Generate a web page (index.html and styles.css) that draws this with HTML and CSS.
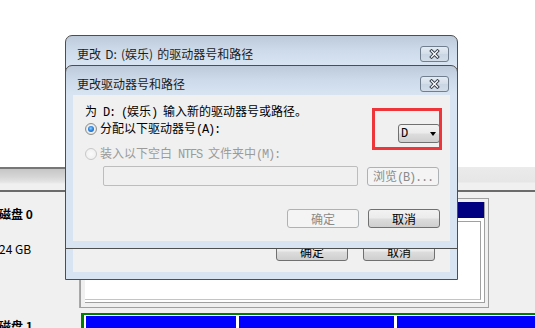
FILE: index.html
```html
<!DOCTYPE html>
<html lang="zh-CN">
<head>
<meta charset="utf-8">
<title>更改驱动器号和路径</title>
<link rel="stylesheet" href="styles.css">
</head>
<body>
<div class="page">
  <div class="listview"></div>
  <div class="hsplit"><div class="hs-left"></div><div class="hs-right"></div></div>
  <div class="splitline"></div>
  <div class="graph">
    <div class="diskrow disk0">
      <div class="disklabel">
        <div class="dname">磁盘 0</div>
        <div class="dsize">24 GB</div>
      </div>
      <div class="diskbody">
        <div class="part">
          <div class="parthead"></div>
          <div class="partbody"><div class="partinner"></div></div>
        </div>
      </div>
    </div>
    <div class="diskrow disk1">
      <div class="disklabel l1"><div class="dname">磁盘 1</div></div>
      <div class="diskbody1">
        <div class="vol v1"></div>
        <div class="vol v2"></div>
        <div class="vol v3"></div>
      </div>
    </div>
  </div>
</div>

<div class="win outer">
  <div class="titlebar">
    <span class="title">更改 D: (娱乐) 的驱动器号和路径</span>
    <span class="close"><svg width="13" height="10" viewBox="0 0 13 10"><path d="M3.5 2L9.5 8M9.5 2L3.5 8" stroke="#3a414b" stroke-width="3.2" stroke-linecap="square" fill="none"/><path d="M3.5 2L9.5 8M9.5 2L3.5 8" stroke="#ffffff" stroke-width="1.3" stroke-linecap="square" fill="none"/></svg></span>
  </div>
  <div class="frame">
    <div class="client outer-client">
      <div class="btnrow outer-btns">
        <div class="btn">确定</div>
        <div class="btn">取消</div>
      </div>
    </div>
  </div>
</div>

<div class="win inner">
  <div class="titlebar">
    <span class="title">更改驱动器号和路径</span>
    <span class="close"><svg width="13" height="10" viewBox="0 0 13 10"><path d="M3.5 2L9.5 8M9.5 2L3.5 8" stroke="#3a414b" stroke-width="3.2" stroke-linecap="square" fill="none"/><path d="M3.5 2L9.5 8M9.5 2L3.5 8" stroke="#ffffff" stroke-width="1.3" stroke-linecap="square" fill="none"/></svg></span>
  </div>
  <div class="frame">
    <div class="client inner-client">
      <div class="prompt">为<span class="en"> D: (</span>娱乐<span class="en">) </span>输入新的驱动器号或路径。</div>
      <div class="optrow">
        <div class="opt"><span class="radio on"></span><span class="optlabel">分配以下驱动器号<span class="en">(A):</span></span></div>
        <div class="combo"><span class="en">D</span><span class="arrow"></span></div>
      </div>
      <div class="opt disabled"><span class="radio off"></span><span class="optlabel">装入以下空白<span class="en"> NTFS </span>文件夹中<span class="en">(M):</span></span></div>
      <div class="pathrow">
        <div class="pathbox"></div>
        <div class="btn dis browse"><span>浏览<span class="en">(B)...</span></span></div>
      </div>
      <div class="btnrow inner-btns">
        <div class="btn dis">确定</div>
        <div class="btn">取消</div>
      </div>
      <div class="highlight"></div>
    </div>
  </div>
</div>
</body>
</html>
```

FILE: styles.css
```css
* { box-sizing: border-box; }
html, body { margin: 0; padding: 0; }
body {
  width: 535px;
  height: 328px;
  overflow: hidden;
  position: relative;
  background: #ffffff;
  font-family: "Noto Sans CJK SC", sans-serif;
  font-size: 12px;
  line-height: 16px;
  color: #000;
}

/* ---------- background: disk management ---------- */
.page { width: 535px; height: 328px; display: flex; flex-direction: column; }
.listview { height: 167px; flex: none; background: #fff; }
.hsplit { height: 23px; flex: none; display: flex; }
.hs-left {
  width: 65px;
  border-top: 2px solid #777;
  background: linear-gradient(#c6c6c6 0, #d6d6d6 8px, #e4e4e4 13px, #f0f0f0 15px, #f0f0f0 100%);
}
.hs-right {
  flex: 1;
  background: linear-gradient(#ebebeb 0, #e6e6e6 15px, #f0f0f0 16px, #f0f0f0 100%);
}
.splitline { height: 2px; flex: none; background: #6b6b6b; }
.graph { flex: 1; background: #f0f0f0; }

.diskrow { display: flex; }
.disk0 { height: 116px; }
.disklabel {
  width: 81px;
  flex: none;
  padding-top: 14px;
  margin-left: -1px;
  border-right: 1px solid #a8a8a8;
}
.dname { font-weight: bold; }
.dsize { margin-top: 19px; }

.diskbody {
  width: 409px;
  height: 110px;
  margin-top: 6px;
  border: 1px solid #a0a0a0;
  padding: 3px 3px 3px 4px;
  background: #f0f0f0;
}
.part {
  height: 101px;
  border-right: 1px solid #a0a0a0;
  border-bottom: 1px solid #a0a0a0;
  display: flex;
  flex-direction: column;
}
.parthead { height: 16px; flex: none; background: #000080; }
.partbody { flex: 1; background: #fff; padding: 3px 3px 2px 0; }
.partinner {
  height: 100%;
  border-top: 1px solid #a0a0a0;
  border-right: 1px solid #a0a0a0;
  border-bottom: 1px solid #c4c4c4;
}

.disk1 { height: 20px; }
.l1 { padding-top: 10px; border-right: none; }
.diskbody1 {
  flex: 1;
  margin-top: 5px;
  margin-left: 1px;
  border-top: 2px solid #008000;
  border-left: 3px solid #008000;
  background: #fff;
  padding: 1px 0 0 2px;
  display: flex;
  gap: 3px;
}
.vol { background: #0000ff; height: 20px; }
.v1 { width: 150px; }
.v2 { width: 155px; }
.v3 { flex: 1; }

/* ---------- dialogs ---------- */
.win {
  position: absolute;
  left: 65px;
  width: 393px;
  border: 1px solid #4e4e4e;
  border-radius: 7px 7px 0 0;
  background: linear-gradient(#bccad9 0, #cddaea 14px, #d8e4f2 29px, #d8e4f2 100%);
  display: flex;
  flex-direction: column;
}
.outer { top: 35px; height: 245px; }
.inner { top: 65px; height: 184px; }

.titlebar {
  height: 29px;
  flex: none;
  display: flex;
  justify-content: space-between;
  align-items: flex-start;
  padding: 10px 8px 0 11px;
}
.title { color: #1c1c1c; font-size: 12px; line-height: 16px; word-spacing: 1.5px; }
.close {
  width: 29px;
  height: 16px;
  border: 1px solid #717e8e;
  border-radius: 3px;
  background: linear-gradient(#e4ebf3, #d3dde9 50%, #c9d5e3 51%, #d2dde9);
  display: flex;
  align-items: center;
  justify-content: center;
}
.frame { flex: 1; display: flex; padding: 0 7px 7px; background: #d8e4f2; }
.client { flex: 1; background: #f0f0f0; }

.en {
  font-family: "Liberation Mono", monospace;
  letter-spacing: -1.2px;
  white-space: pre;
}

.btn {
  width: 72px;
  height: 19px;
  border: 1px solid #707070;
  border-radius: 3px;
  background: linear-gradient(#f2f2f2 0%, #ebebeb 48%, #dddddd 52%, #cfcfcf 100%);
  display: flex;
  align-items: center;
  justify-content: center;
  color: #000;
  font-size: 12px;
  line-height: 16px;
  white-space: nowrap;
}
.btn.dis {
  border-color: #adb2b5;
  background: #f4f4f4;
  color: #8a8a8a;
}

.outer-client {
  display: flex;
  flex-direction: column;
  justify-content: flex-end;
  padding: 0 15px 11px 0;
}
.btnrow { display: flex; justify-content: flex-end; }
.outer-btns { gap: 15px; }

.inner-client {
  position: relative;
  padding: 8px 10px 0 12px;
}
.prompt { height: 16px; white-space: nowrap; }
.optrow {
  margin-top: 2px;
  height: 22px;
  display: flex;
  justify-content: space-between;
  align-items: flex-start;
}
.opt {
  height: 16px;
  display: flex;
  align-items: center;
  white-space: nowrap;
}
.optlabel { white-space: nowrap; }
.opt.disabled { margin-top: 3px; color: #9b9b9b; }
.radio {
  width: 12px;
  height: 12px;
  flex: none;
  margin-right: 3px;
  border-radius: 50%;
  border: 1px solid #8e8f8f;
  background: radial-gradient(circle at 50% 50%, #ffffff 0, #f0f0f0 50%, #d2d2d2 100%);
  position: relative;
}
.radio.on::after {
  content: "";
  position: absolute;
  left: 2px;
  top: 2px;
  width: 6px;
  height: 6px;
  border-radius: 50%;
  background: radial-gradient(circle at 45% 40%, #8fd0ff 0, #2f86e0 45%, #0f4a9e 100%);
}
.radio.off {
  border-color: #c8c8c8;
  background: radial-gradient(circle, #fbfbfb 0, #ececec 100%);
}
.combo {
  margin-top: 3px;
  width: 42px;
  height: 19px;
  border: 1px solid #707070;
  border-radius: 3px;
  background: linear-gradient(#f2f2f2 0%, #ebebeb 48%, #dddddd 52%, #cfcfcf 100%);
  display: flex;
  align-items: center;
  justify-content: space-between;
  padding: 0 3px 0 2px;
}
.arrow {
  width: 0;
  height: 0;
  border-top: 4px solid #000;
  border-left: 3.5px solid transparent;
  border-right: 3.5px solid transparent;
}
.pathrow {
  margin-top: 4px;
  padding-left: 18px;
  display: flex;
  align-items: flex-start;
}
.pathbox {
  width: 255px;
  height: 20px;
  border: 1px solid #bdbdbd;
  border-radius: 2px;
  background: #f0f0f0;
}
.browse { margin-left: 9px; margin-top: 1px; }
.inner-btns { margin-top: 23px; gap: 9px; }

.highlight {
  position: absolute;
  left: 299px;
  top: 13px;
  width: 70px;
  height: 42px;
  border: 3px solid #ee363a;
}
```
